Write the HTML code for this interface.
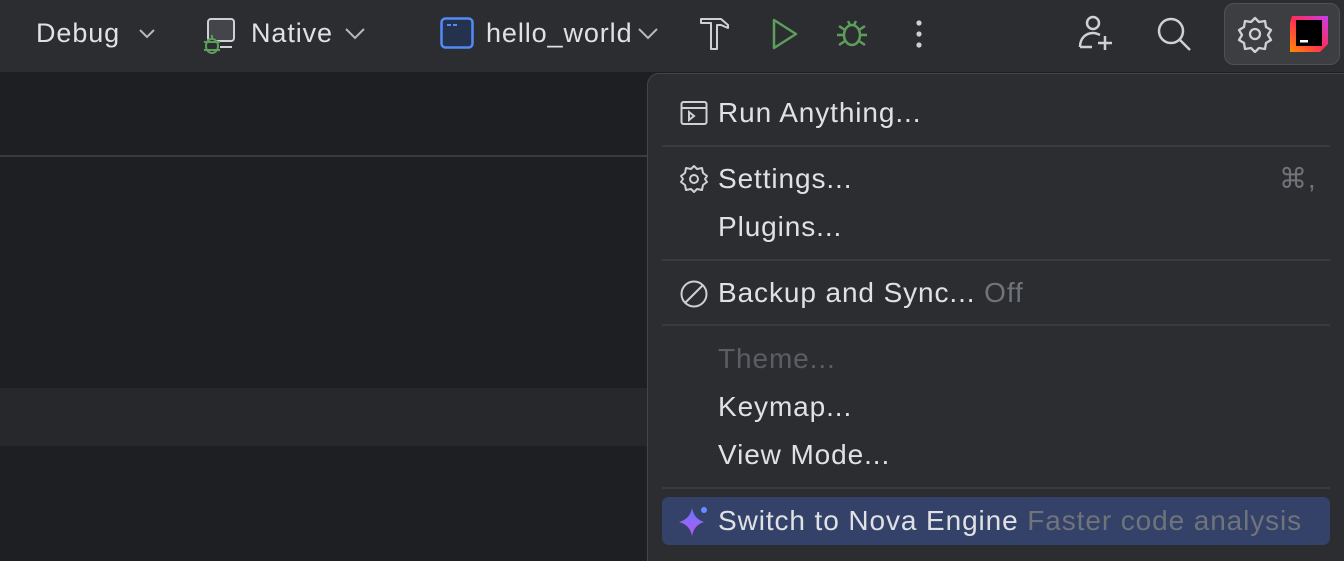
<!DOCTYPE html>
<html style="overflow:hidden;height:561px"><head><style>
body{margin:0;width:1344px;height:561px;background:#1e1f22;overflow:hidden;position:relative;font-family:"Liberation Sans",sans-serif;color:#dfe1e5}
.top{position:absolute;left:0;top:0;width:1344px;height:72px;background:#2b2d30;border-bottom:1px solid #1e1f22}
.t{position:absolute;font-size:27px;line-height:30px;color:#dfe1e5;letter-spacing:0.9px}
.hl{position:absolute;left:0;top:155px;width:648px;height:2px;background:#393b40}
.row{position:absolute;left:0;top:388px;width:648px;height:58px;background:#26282b}
.pop{position:absolute;left:647px;top:73px;width:720px;height:500px;background:#2b2d30;border:1px solid #43454a;border-radius:12px}
.m{position:absolute;left:718px;font-size:28px;line-height:30px;color:#dfe1e5;letter-spacing:0.9px;white-space:nowrap}
.sep{position:absolute;left:662px;width:668px;height:2px;background:#393b40}
.sel{position:absolute;left:662px;top:497px;width:668px;height:48px;background:#34426a;border-radius:7px}
.g{color:#6f737a}
svg{position:absolute}
</style></head><body>
<div class="top"></div>
<div class="t" style="left:36px;top:18px">Debug</div>
<svg style="left:138px;top:26px" width="18" height="14"><path d="M2 4l7 7 7-7" stroke="#b4b8bf" stroke-width="2" fill="none"/></svg>
<svg style="left:198px;top:16px" width="44" height="40"><rect x="10" y="3" width="26" height="22" rx="3" fill="#43454a" stroke="#ced0d6" stroke-width="2"/><path d="M22 31h12" stroke="#ced0d6" stroke-width="2"/><ellipse cx="14" cy="30" rx="6" ry="7" fill="#2b2d30" stroke="#5e9e5b" stroke-width="2"/><path d="M6 26h16M6 34h16M14 22v-3" stroke="#5e9e5b" stroke-width="2"/></svg>
<div class="t" style="left:251px;top:18px">Native</div>
<svg style="left:344px;top:26px" width="24" height="14"><path d="M2 3l9 9 9-9" stroke="#b4b8bf" stroke-width="2" fill="none"/></svg>
<svg style="left:440px;top:17px" width="36" height="34"><rect x="1.5" y="1.5" width="31" height="29" rx="4" fill="#25324d" stroke="#548af7" stroke-width="2.5"/><path d="M7 8h4M13 8h4" stroke="#548af7" stroke-width="2"/></svg>
<div class="t" style="left:486px;top:18px">hello_world</div>
<svg style="left:637px;top:26px" width="24" height="14"><path d="M2 3l9 9 9-9" stroke="#b4b8bf" stroke-width="2" fill="none"/></svg>
<svg style="left:698px;top:15px" width="36" height="36"><path d="M3 4h20l7 6v3l-7-3H19v24h-6V8H3z" fill="none" stroke="#ced0d6" stroke-width="2" stroke-linejoin="round"/></svg>
<svg style="left:770px;top:17px" width="30" height="34"><path d="M4 3l22 14-22 14z" fill="none" stroke="#5e9e5b" stroke-width="2.5" stroke-linejoin="round"/></svg>
<svg style="left:834px;top:15px" width="36" height="36"><ellipse cx="18" cy="20" rx="8" ry="10" fill="none" stroke="#5e9e5b" stroke-width="2.5"/><path d="M3 20h7M26 20h7M5 11l6 4M31 11l-6 4M5 30l6-4M31 30l-6-4M14 6l2 4M22 6l-2 4" stroke="#5e9e5b" stroke-width="2.5"/></svg>
<svg style="left:912px;top:18px" width="14" height="32"><circle cx="7" cy="5" r="2.6" fill="#ced0d6"/><circle cx="7" cy="16" r="2.6" fill="#ced0d6"/><circle cx="7" cy="27" r="2.6" fill="#ced0d6"/></svg>
<svg style="left:1076px;top:14px" width="40" height="40"><circle cx="17" cy="9" r="6" fill="none" stroke="#ced0d6" stroke-width="2.5"/><path d="M4 33c0-9 6-14 13-14 3 0 5 1 7 2M4 33h12M29 22v14M22 29h14" fill="none" stroke="#ced0d6" stroke-width="2.5"/></svg>
<svg style="left:1156px;top:16px" width="38" height="38"><circle cx="15" cy="15" r="12" fill="none" stroke="#ced0d6" stroke-width="2.5"/><path d="M24 24l10 10" stroke="#ced0d6" stroke-width="2.5"/></svg>
<div style="position:absolute;left:1224px;top:3px;width:114px;height:60px;background:#3c3e42;border:1px solid #4e5157;border-radius:10px"></div>
<svg style="left:1236px;top:15px" width="38" height="38"><path d="M19 3l4 4 6-1 1 6 5 3-3 5 3 5-5 3-1 6-6-1-4 4-4-4-6 1-1-6-5-3 3-5-3-5 5-3 1-6 6 1z" fill="none" stroke="#ced0d6" stroke-width="2.3" stroke-linejoin="round"/><circle cx="19" cy="19" r="5" fill="none" stroke="#ced0d6" stroke-width="2.3"/></svg>
<svg style="left:1286px;top:11px" width="44" height="42"><defs><linearGradient id="jb" x1="0" y1="1" x2="1" y2="0"><stop offset="0" stop-color="#ff8a00"/><stop offset=".5" stop-color="#ff2d55"/><stop offset="1" stop-color="#c83cf0"/></linearGradient></defs><path d="M6 5h36v28l-8 8H4V12z" fill="url(#jb)"/><rect x="10" y="9" width="26" height="26" fill="#000"/><rect x="14" y="29" width="8" height="2.5" fill="#fff"/></svg>

<div class="hl"></div>
<div class="row"></div>

<div class="pop"></div>
<svg style="left:680px;top:100px" width="28" height="26"><rect x="1.5" y="2" width="25" height="22" rx="2" fill="none" stroke="#ced0d6" stroke-width="2"/><path d="M2 8h24M9 12l5 4-5 4z" fill="none" stroke="#ced0d6" stroke-width="2"/></svg>
<div class="m" style="top:98px">Run Anything...</div>
<div class="sep" style="top:145px"></div>
<svg style="left:679px;top:164px" width="30" height="30"><path d="M15 2l3 3 5-1 1 5 4 3-2 3 2 3-4 3-1 5-5-1-3 3-3-3-5 1-1-5-4-3 2-3-2-3 4-3 1-5 5 1z" fill="none" stroke="#ced0d6" stroke-width="2" stroke-linejoin="round"/><circle cx="15" cy="15" r="4" fill="none" stroke="#ced0d6" stroke-width="2"/></svg>
<div class="m" style="top:164px">Settings...</div>
<div class="m g" style="left:1279px;top:164px">⌘,</div>
<div class="m" style="top:212px">Plugins...</div>
<div class="sep" style="top:259px"></div>
<svg style="left:679px;top:279px" width="30" height="30"><circle cx="15" cy="15" r="12.5" fill="none" stroke="#ced0d6" stroke-width="2"/><path d="M6 24L24 6" stroke="#ced0d6" stroke-width="2"/></svg>
<div class="m" style="top:278px">Backup and Sync... <span class="g">Off</span></div>
<div class="sep" style="top:324px"></div>
<div class="m" style="top:344px;color:#5a5d63">Theme...</div>
<div class="m" style="top:392px">Keymap...</div>
<div class="m" style="top:440px">View Mode...</div>
<div class="sep" style="top:487px"></div>
<div class="sel"></div>
<svg style="left:676px;top:505px" width="34" height="34"><defs><linearGradient id="st" x1="0" y1="0" x2="0" y2="1"><stop offset="0" stop-color="#6b73ff"/><stop offset="1" stop-color="#b45cf0"/></linearGradient></defs><path d="M16 3q2 11 12 14q-10 3-12 14q-2-11-13-14q11-3 13-14z" fill="url(#st)"/><circle cx="28" cy="5" r="3" fill="#6b8cff"/></svg>
<div class="m" style="top:506px">Switch to Nova Engine <span class="g">Faster code analysis</span></div>
</body></html>
